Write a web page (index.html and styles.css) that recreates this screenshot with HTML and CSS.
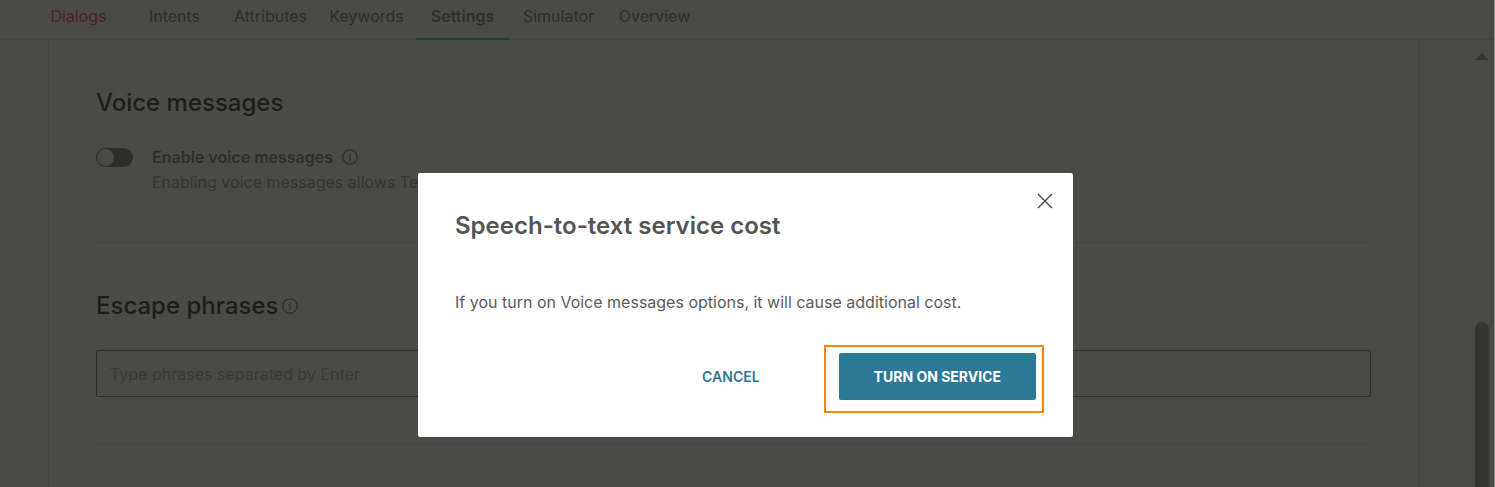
FILE: index.html
```html
<!DOCTYPE html>
<html lang="en">
<head>
  <meta charset="UTF-8" />
  <meta name="viewport" content="width=device-width, initial-scale=1.0" />
  <title>Settings</title>
  <link rel="stylesheet" href="styles.css">
</head>
<body>

  <div class="page">
    <nav class="tabs">
      <a href="#dialogs" class="tab tab-alert">Dialogs</a>
      <a href="#intents" class="tab">Intents</a>
      <a href="#attributes" class="tab">Attributes</a>
      <a href="#keywords" class="tab">Keywords</a>
      <a href="#settings" class="tab tab-active">Settings</a>
      <a href="#simulator" class="tab">Simulator</a>
      <a href="#overview" class="tab">Overview</a>
    </nav>

    <div class="content">
      <main class="card">
        <section class="section voice">
          <h2>Voice messages</h2>
          <div class="option">
            <input type="checkbox" id="voice" class="switch" />
            <div class="option-text">
              <div class="option-title">
                <label for="voice">Enable voice messages</label>
                <svg class="info" viewBox="0 0 16 16" aria-hidden="true">
                  <circle cx="8" cy="8" r="7.2" />
                  <path d="M6.8 7H8v5M8 4v1.5" />
                </svg>
              </div>
              <p>Enabling voice messages allows Te</p>
            </div>
          </div>
        </section>

        <section class="section phrases">
          <div class="heading">
            <h2><label for="phrases">Escape phrases</label></h2>
            <svg class="info" viewBox="0 0 16 16" aria-hidden="true">
              <circle cx="8" cy="8" r="7.2" />
              <path d="M6.8 7H8v5M8 4v1.5" />
            </svg>
          </div>
          <input type="text" id="phrases" class="phrases-input" placeholder="Type phrases separated by Enter" />
        </section>
      </main>

      <!-- Scrollbar -->
      <div class="scrollbar">
        <div class="scroll-arrow"></div>
        <div class="scroll-thumb"></div>
      </div>
    </div>
  </div>

  <!-- Confirmation dialog -->
  <div class="overlay">
    <div class="dialog" role="dialog" aria-modal="true" aria-labelledby="dialog-title">
      <button type="button" class="close" aria-label="Close">
        <svg viewBox="0 0 16 16" aria-hidden="true">
          <path d="M1 1l14 14M15 1L1 15" />
        </svg>
      </button>
      <h1 id="dialog-title">Speech-to-text service cost</h1>
      <p>If you turn on Voice messages options, it will cause additional cost.</p>
      <div class="dialog-actions">
        <button type="button" class="btn-cancel">CANCEL</button>
        <div class="highlight">
          <button type="button" class="btn-primary">TURN ON SERVICE</button>
        </div>
      </div>
    </div>
  </div>

</body>
</html>
```

FILE: styles.css
```css
/* Reset */
*, *::before, *::after {
  box-sizing: border-box;
}
body {
  margin: 0;
  font-family: Inter, "Liberation Sans", sans-serif;
  font-size: 16px;
  line-height: 24px;
  color: #2d2d2b;
  background: #4a4a47;
}
h1, h2, p {
  margin: 0;
}
h2 {
  font-size: 24px;
  line-height: 32px;
  font-weight: 500;
  color: #1c1c1a;
}
button {
  font-family: inherit;
  border: none;
  cursor: pointer;
}
.page {
  display: flex;
  flex-direction: column;
  height: 100vh;
  overflow: hidden;
  border-right: 1px solid #8b8b89;
}

/* Tabs */
.tabs {
  display: flex;
  gap: 3px;
  height: 40px;
  flex: none;
  padding-left: 32px;
  border-bottom: 1px solid #444441;
}
.tab {
  width: 93px;
  height: 40px;
  padding-top: 4px;
  text-align: center;
  color: #2d2d2b;
  text-decoration: none;
}
.tab-alert {
  color: #4b2125;
}
.tab-active {
  font-weight: 600;
  border-bottom: 2px solid #1c4034;
}

/* Settings card */
.content {
  display: flex;
  flex: 1;
  padding-left: 48px;
  background: #494946;
}
.card {
  flex: 1;
  padding: 0 47px;
  background: #4a4a47;
  border-left: 1px solid #444441;
  border-right: 1px solid #444441;
}
.section {
  border-bottom: 1px solid #444441;
}
.voice {
  padding: 47px 0 48px;
}
.option {
  display: flex;
  gap: 19px;
  margin-top: 26px;
}
.switch {
  appearance: none;
  flex: none;
  width: 37px;
  height: 19px;
  margin: 3px 0 0;
  padding: 1px;
  border-radius: 10px;
  background: #2d2d2b;
}
.switch::before {
  content: "";
  display: block;
  width: 17px;
  height: 17px;
  border-radius: 50%;
  background: #4a4a47;
}
.option-title {
  display: flex;
  align-items: center;
  gap: 9px;
  font-weight: 600;
}
.option-text p {
  margin-top: 1px;
  color: #353532;
}
.info {
  width: 16px;
  height: 16px;
  fill: none;
  stroke: #2d2d2b;
  stroke-width: 1.2;
}
.phrases {
  padding: 47px 0;
}
.heading {
  display: flex;
  align-items: center;
  gap: 4px;
}
.phrases-input {
  display: block;
  width: 100%;
  height: 47px;
  margin-top: 28px;
  padding: 0 13px;
  font: inherit;
  color: #2d2d2b;
  background: transparent;
  border: 1px solid #2d2d2b;
  border-radius: 2px;
}
.phrases-input::placeholder {
  color: #3a3a37;
  opacity: 1;
}

/* Scrollbar */
.scrollbar {
  display: flex;
  flex-direction: column;
  width: 75px;
  padding: 13px 5px 0 56px;
}
.scroll-arrow {
  height: 7px;
  margin-bottom: 262px;
  background: #333330;
  clip-path: polygon(50% 0, 100% 100%, 0 100%);
}
.scroll-thumb {
  flex: 1;
  background: #333330;
  border-radius: 7px 7px 0 0;
}

/* Dialog */
.overlay {
  position: fixed;
  inset: 0;
  display: flex;
  justify-content: center;
  align-items: flex-start;
  padding: 173px 4px 0 0;
}
.dialog {
  position: relative;
  width: 655px;
  padding: 37px 29px 24px 37px;
  background: #fff;
  border-radius: 2px;
  color: #555553;
}
.dialog h1 {
  font-size: 24px;
  line-height: 32px;
  font-weight: 600;
}
.dialog p {
  margin-top: 48px;
  color: #5c5c5a;
}
.close {
  position: absolute;
  top: 20px;
  right: 20px;
  width: 16px;
  height: 16px;
  padding: 0;
  background: none;
}
.close svg {
  display: block;
  fill: none;
  stroke: #4a4a47;
  stroke-width: 1.4;
}
.dialog-actions {
  display: flex;
  justify-content: flex-end;
  align-items: center;
  gap: 29px;
  margin-top: 31px;
}
.btn-cancel,
.btn-primary {
  height: 47px;
  padding: 0 35px;
  font-size: 14px;
  line-height: 20px;
  border-radius: 2px;
}
.btn-cancel {
  font-weight: 600;
  color: #2d7797;
  background: none;
  margin-bottom: 4px;
}
.btn-primary {
  display: block;
  font-weight: 700;
  color: #fff;
  background: #2d7797;
}
.highlight {
  padding: 6px 6px 11px 13px;
  border: 2px solid #ff8400;
}
```
